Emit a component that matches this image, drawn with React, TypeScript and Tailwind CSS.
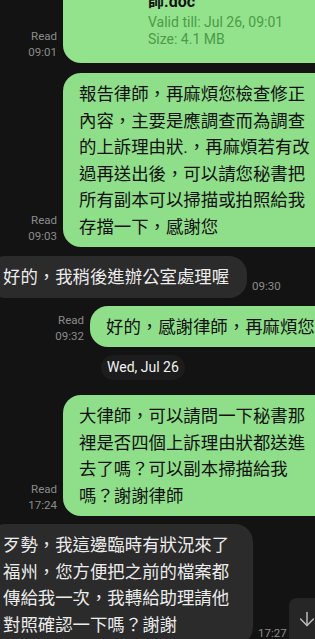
import { ArrowDown } from 'lucide-react';

type Stamp = { read?: boolean; time: string };

function Meta({ read, time, side }: Stamp & { side: 'left' | 'right' }) {
  return (
    <div
      className={`shrink-0 text-[11.5px] leading-[16px] text-[#8b8b8b] ${
        side === 'left' ? 'text-right mr-[6px] mb-[3px]' : 'text-left ml-[5px] mb-[4px]'
      }`}
    >
      {read && <div>Read</div>}
      <div>{time}</div>
    </div>
  );
}

function Outgoing({ lines, stamp, width }: { lines: string[]; stamp: Stamp; width: string }) {
  return (
    <div className="flex items-end justify-end">
      <Meta {...stamp} side="left" />
      <div className={`${width} -mr-[38px] shrink-0 rounded-[18px] bg-[#8fde89] pl-4 pt-[8px] pb-[7px] text-[17.4px] leading-[26.5px] text-[#111]`}>
        {lines.map((l) => (
          <div key={l} className="whitespace-nowrap">
            {l}
          </div>
        ))}
      </div>
    </div>
  );
}

function Incoming({ lines, stamp, pr }: { lines: string[]; stamp: Stamp; pr: string }) {
  return (
    <div className="flex items-end justify-start">
      <div className={`-ml-[13px] shrink-0 rounded-[18px] bg-[#2b2b2b] pl-4 ${pr} pt-[8px] pb-[7px] text-[17.4px] leading-[26.5px] text-[#ececec]`}>
        {lines.map((l) => (
          <div key={l} className="whitespace-nowrap">
            {l}
          </div>
        ))}
      </div>
      <Meta {...stamp} side="right" />
    </div>
  );
}

export default function App() {
  return (
    <div className="relative h-[639px] w-[315px] overflow-hidden bg-[#131313] [font-family:Roboto,'Noto_Sans_CJK_TC',sans-serif]">
      <div className="-mt-[18px] flex flex-col">
        <div className="flex items-end justify-end">
          <Meta read time="09:01" side="left" />
          <div className="-mr-[38px] w-[290px] shrink-0 rounded-[18px] bg-[#93e38d] pl-[85px] pt-[8px] pb-[15px]">
            <div className="text-[16px] font-bold leading-[24px] text-[#111]">師.doc</div>
            <div className="text-[14px] leading-[17px] text-[#4c9a48]">Valid till: Jul 26, 09:01</div>
            <div className="text-[14px] leading-[17px] text-[#4c9a48]">Size: 4.1 MB</div>
          </div>
        </div>

        <div className="mt-[10px]">
          <Outgoing
            width="w-[290px]"
            stamp={{ read: true, time: '09:03' }}
            lines={[
              '報告律師，再麻煩您檢查修正',
              '內容，主要是應調查而為調查',
              '的上訴理由狀.，再麻煩若有改',
              '過再送出後，可以請您秘書把',
              '所有副本可以掃描或拍照給我',
              '存擋一下，感謝您',
            ]}
          />
        </div>

        <div className="mt-[9px]">
          <Incoming pr="pr-[18px]" stamp={{ time: '09:30' }} lines={['好的，我稍後進辦公室處理喔']} />
        </div>

        <div className="mt-[8px]">
          <Outgoing width="w-[263px]" stamp={{ read: true, time: '09:32' }} lines={['好的，感謝律師，再麻煩您']} />
        </div>

        <div className="mt-[8px] ml-[101px] flex">
          <div className="flex h-[25px] items-center rounded-full bg-[#1c1c1c] px-[6px] text-[14px] text-[#f2f2f2]">
            Wed, Jul 26
          </div>
        </div>

        <div className="mt-[15px]">
          <Outgoing
            width="w-[290px]"
            stamp={{ read: true, time: '17:24' }}
            lines={[
              '大律師，可以請問一下秘書那',
              '裡是否四個上訴理由狀都送進',
              '去了嗎？可以副本掃描給我',
              '嗎？謝謝律師',
            ]}
          />
        </div>

        <div className="mt-[8px]">
          <Incoming
            pr="pr-[24px]"
            stamp={{ time: '17:27' }}
            lines={[
              '歹勢，我這邊臨時有狀況來了',
              '福州，您方便把之前的檔案都',
              '傳給我一次，我轉給助理請他',
              '對照確認一下嗎？謝謝',
            ]}
          />
        </div>
      </div>

      <div className="absolute left-[289px] top-[598px] flex h-[50px] w-[36px] justify-center rounded-[8px] bg-[#262626] pt-[10px]">
        <ArrowDown size={22} strokeWidth={1.6} className="text-[#bdbdbd]" />
      </div>
    </div>
  );
}
